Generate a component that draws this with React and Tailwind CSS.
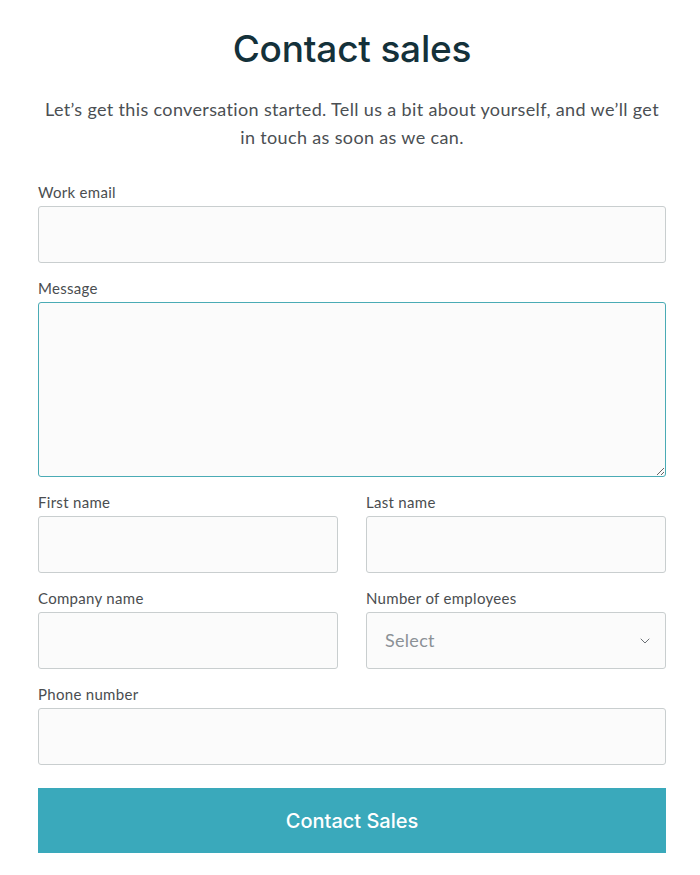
import { ChevronDown } from 'lucide-react';

const Field = ({ label, children, className = '' }) => (
  <div className={className}>
    <label className="block text-[15px] leading-5 tracking-[0.3px] text-[#4a4d50] mb-1">{label}</label>
    {children}
  </div>
);

const inputCls =
  'block w-full h-[57px] rounded-[3px] border border-[#c9cecf] bg-[#fbfbfb] px-4 text-[17px] text-[#333] outline-none';

export default function App() {
  return (
    <div className="min-h-screen bg-white font-['Lato','Liberation_Sans',sans-serif]">
      <div className="ml-[38px] w-[628px] pt-[27px] pb-8">
        <h1 className="text-center text-[37px] leading-[44px] font-medium text-[#14313a] font-['Inter','Lato',sans-serif] tracking-[-0.2px]">
          Contact sales
        </h1>
        <p className="mt-[24px] text-center text-[18px] leading-[28px] tracking-[0.35px] text-[#4b4f53]">
          Let’s get this conversation started. Tell us a bit about yourself, and we’ll get
          <br />
          in touch as soon as we can.
        </p>

        <form className="mt-[31px] flex flex-col gap-[15px]" onSubmit={(e) => e.preventDefault()}>
          <Field label="Work email">
            <input type="email" className={inputCls} />
          </Field>

          <Field label="Message">
            <textarea className="block w-full h-[175px] rounded-[3px] border-[1.5px] border-[#4aabb5] bg-[#fbfbfb] px-4 py-3 text-[17px] outline-none resize-y" />
          </Field>

          <div className="grid grid-cols-2 gap-x-[28px]">
            <Field label="First name">
              <input className={inputCls} />
            </Field>
            <Field label="Last name">
              <input className={inputCls} />
            </Field>
          </div>

          <div className="grid grid-cols-2 gap-x-[28px]">
            <Field label="Company name">
              <input className={inputCls} />
            </Field>
            <Field label="Number of employees">
              <div className="relative">
                <div className="flex h-[57px] w-full items-center rounded-[3px] border border-[#c9cecf] bg-[#fbfbfb] pl-[18px] pr-3 text-[18px] tracking-[0.3px] text-[#8b9196]">
                  Select
                </div>
                <ChevronDown
                  size={16}
                  strokeWidth={1.5}
                  className="absolute right-[13px] top-1/2 -translate-y-1/2 text-[#6b7075]"
                />
              </div>
            </Field>
          </div>

          <Field label="Phone number">
            <input type="tel" className={inputCls} />
          </Field>

          <button
            type="submit"
            className="mt-[8px] h-[65px] w-full bg-[#3aa9bb] text-[20px] font-medium text-white font-['Inter','Lato',sans-serif]"
          >
            Contact Sales
          </button>
        </form>
      </div>
    </div>
  );
}
